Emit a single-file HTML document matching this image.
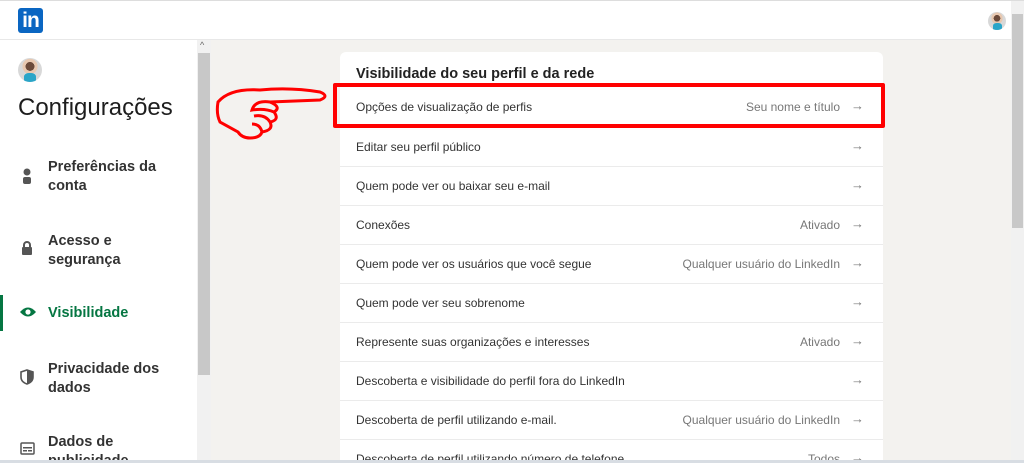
<!DOCTYPE html>
<html style="overflow:hidden;width:1024px;height:463px"><head><meta charset="utf-8"><style>
*{margin:0;padding:0;box-sizing:border-box}
body{width:1024px;height:463px;overflow:hidden;background:#f3f2ef;font-family:"Liberation Sans",sans-serif;position:relative}
.top{position:absolute;left:0;top:0;width:1024px;height:40px;background:#fff;border-top:1px solid #ddd;border-bottom:1px solid #e8e8e8}
.logo{position:absolute;left:18px;top:7px;width:25px;height:25px;background:#0a66c2;border-radius:3px;color:#fff;font-weight:bold;font-size:21px;line-height:25px;text-align:center;letter-spacing:-1px}
.av{position:absolute;border-radius:50%;background:radial-gradient(circle at 50% 35%,#6b4a3a 0 22%,#e8c8b0 23% 38%,#d8d8d8 39%);overflow:hidden}
.av::after{content:"";position:absolute;left:25%;bottom:0;width:50%;height:38%;background:#2aa5c8;border-radius:40% 40% 0 0}
.side{position:absolute;left:0;top:40px;width:197px;height:423px;background:#fff;overflow:hidden}
.sb{position:absolute;left:197px;top:40px;width:14px;height:421px;background:#f1f1f1}
.sb .th{position:absolute;left:1px;top:13px;width:12px;height:322px;background:#c8c8c8}
.h1{position:absolute;left:18px;top:54px;font-size:24px;color:#1d1d1d;white-space:nowrap}
.nav{position:absolute;left:48px;font-size:14.5px;font-weight:bold;color:#333;line-height:19px}
.ic{position:absolute;left:20px}
.card{position:absolute;left:340px;top:52px;width:543px;height:420px;background:#fff;border-radius:6px}
.title{position:absolute;left:16px;top:14px;font-size:14.5px;color:#222;font-weight:600}
.row{position:absolute;left:0;width:543px;height:39px;border-top:1px solid #ebebeb;font-size:12px;color:#333;line-height:38px}
.row .l{position:absolute;left:16px}
.row .r{position:absolute;right:43px;color:#777}
.row .a{position:absolute;right:19px;color:#777;font-size:13px;line-height:36px}
.rs{position:absolute;left:1011px;top:1px;width:13px;height:462px;background:#f1f1f1}
.rs .th{position:absolute;left:1px;top:13px;width:11px;height:214px;background:#c8c8c8}
.red{position:absolute;left:333px;top:83px;width:552px;height:45px;border:4px solid #f00;border-radius:2px}
.bot{position:absolute;left:0;top:460px;width:1024px;height:3px;background:#d8dde3}
</style></head><body>
<div class="top"><div class="logo">in</div><div class="av" style="left:988px;top:11px;width:18px;height:18px"></div></div>
<div class="side">
<div class="av" style="left:18px;top:18px;width:24px;height:24px"></div>
<div class="h1">Configurações</div>
<svg class="ic" style="top:128px" width="14" height="18"><circle cx="7" cy="4" r="3.5" fill="#555"/><rect x="3" y="9" width="8" height="7" rx="2" fill="#555"/></svg>
<div class="nav" style="top:118px">Preferências da<br>conta</div>
<svg class="ic" style="top:200px" width="14" height="16"><path d="M4 7V5a3 3 0 0 1 6 0v2" stroke="#555" stroke-width="2" fill="none"/><rect x="2" y="7" width="10" height="8" rx="1" fill="#555"/></svg>
<div class="nav" style="top:192px">Acesso e<br>segurança</div>
<div style="position:absolute;left:0;top:255px;width:3px;height:36px;background:#057642"></div>
<svg class="ic" style="top:266px;left:19px" width="18" height="12"><path d="M1 6Q9 -3 17 6Q9 15 1 6Z" fill="#057642"/><circle cx="9" cy="6" r="2.6" fill="#fff"/></svg>
<div class="nav" style="top:264px;color:#057642">Visibilidade</div>
<svg class="ic" style="top:329px" width="14" height="16"><path d="M7 1L13 3V8Q13 13 7 15Q1 13 1 8V3Z" fill="none" stroke="#555" stroke-width="1.6"/><path d="M7 1L13 3V8Q13 13 7 15Z" fill="#555"/></svg>
<div class="nav" style="top:320px">Privacidade dos<br>dados</div>
<svg class="ic" style="top:402px" width="15" height="13"><rect x="1" y="1" width="13" height="11" rx="1" fill="none" stroke="#555" stroke-width="1.5"/><rect x="3" y="5" width="9" height="1.5" fill="#555"/><rect x="3" y="8" width="4" height="1.5" fill="#555"/><rect x="8" y="8" width="4" height="1.5" fill="#555"/></svg>
<div class="nav" style="top:393px">Dados de<br>publicidade</div>
</div>
<div class="sb"><div class="th"></div><div style="position:absolute;left:3px;top:0;font-size:9px;color:#666">^</div></div>
<svg style="position:absolute;left:210px;top:82px" width="120" height="60"><path d="M8 20Q20 6 50 8Q80 5 110 10Q120 14 110 18L60 20Q72 25 64 30Q70 38 60 40Q64 48 52 50Q50 56 40 56Q32 56 28 50L10 40Q6 32 8 20Z M60 20Q45 18 42 28Q55 26 64 30 M44 34Q55 32 60 40 M42 42Q50 42 52 50" fill="none" stroke="#f00" stroke-width="3"/></svg>
<div class="card">
<div class="title">Visibilidade do seu perfil e da rede</div>
<div class="row" style="top:36px;border-top:none"><span class="l">Opções de visualização de perfis</span><span class="r">Seu nome e título</span><span class="a">→</span></div>
<div class="row" style="top:75px"><span class="l">Editar seu perfil público</span><span class="a">→</span></div>
<div class="row" style="top:114px"><span class="l">Quem pode ver ou baixar seu e-mail</span><span class="a">→</span></div>
<div class="row" style="top:153px"><span class="l">Conexões</span><span class="r">Ativado</span><span class="a">→</span></div>
<div class="row" style="top:192px"><span class="l">Quem pode ver os usuários que você segue</span><span class="r">Qualquer usuário do LinkedIn</span><span class="a">→</span></div>
<div class="row" style="top:231px"><span class="l">Quem pode ver seu sobrenome</span><span class="a">→</span></div>
<div class="row" style="top:270px"><span class="l">Represente suas organizações e interesses</span><span class="r">Ativado</span><span class="a">→</span></div>
<div class="row" style="top:309px"><span class="l">Descoberta e visibilidade do perfil fora do LinkedIn</span><span class="a">→</span></div>
<div class="row" style="top:348px"><span class="l">Descoberta de perfil utilizando e-mail.</span><span class="r">Qualquer usuário do LinkedIn</span><span class="a">→</span></div>
<div class="row" style="top:387px;height:24px;overflow:hidden"><span class="l">Descoberta de perfil utilizando número de telefone</span><span class="r">Todos</span><span class="a">→</span></div>
</div>
<div class="red"></div>
<div class="rs"><div class="th"></div></div>
<div class="bot"></div>
</body></html>
